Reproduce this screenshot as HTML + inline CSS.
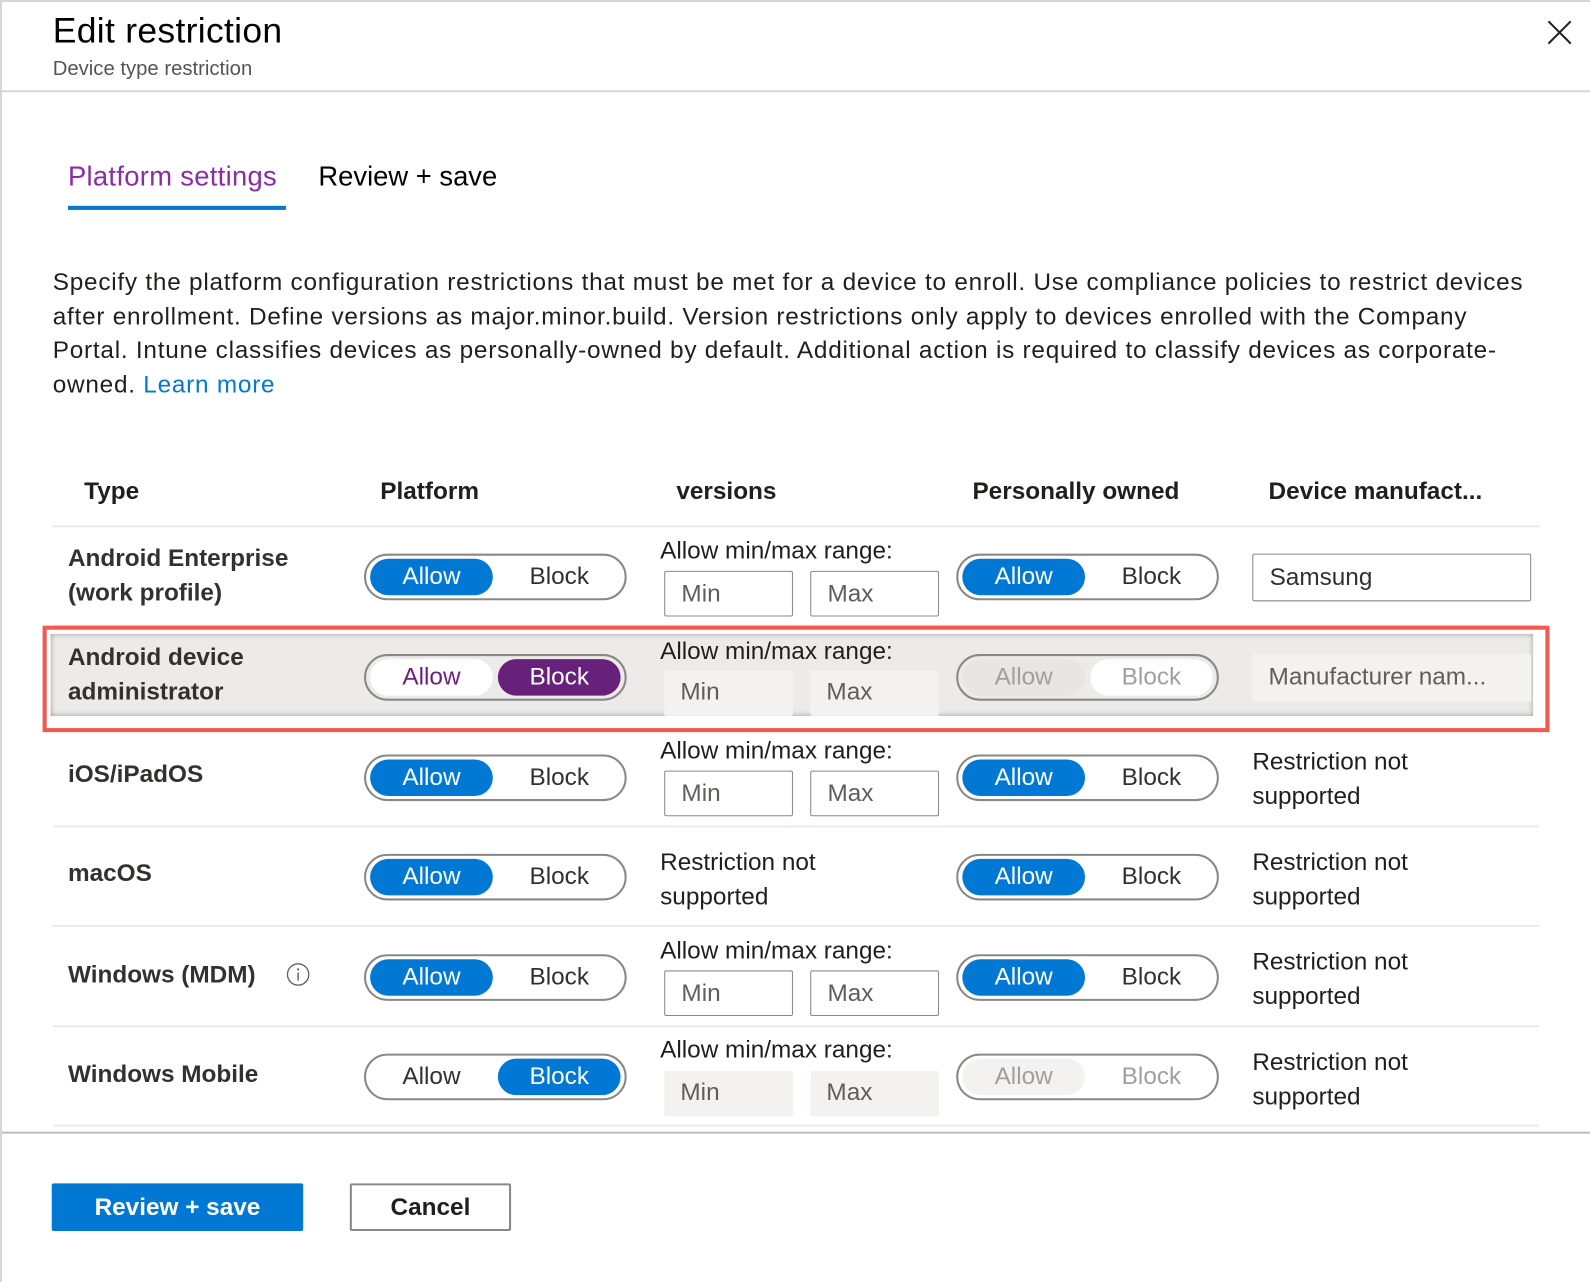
<!DOCTYPE html>
<html><head><meta charset="utf-8">
<style>
html,body{margin:0;padding:0;background:#fff;overflow:hidden;width:1590px;height:1282px}
#w{position:absolute;left:0;top:0;width:1568px;height:1264px;transform:scale(1.01403);transform-origin:0 0;font-family:"Liberation Sans",sans-serif;color:#201f1e}
.a{position:absolute;white-space:nowrap}
.t{font-size:23px;color:#323130}
.b{font-weight:bold;font-size:24px}
.sb{font-weight:bold;font-size:24px}
.tg{position:absolute;width:255px;height:42px;border:2px solid #8a8886;border-radius:24px;background:#fff}
.p{position:absolute;top:3px;height:36px;width:121px;border-radius:18px;font-size:24px;line-height:36px;text-align:center;color:#323130}
.p.l{left:4px}.p.r{left:130px}
.blue{background:#0078d4;color:#fff}
.in{position:absolute;width:124px;height:43px;border:1.5px solid #8a8886;font-size:24px;line-height:43px;padding-left:16px;box-sizing:border-box;color:#605e5c;border-radius:2px}
.dis{background:#f3f2f1;border:none;color:#605e5c}
.sep{position:absolute;left:52px;width:1466px;height:2px;background:#edebe9}
.rn{font-size:24px;line-height:34px;color:#201f1e}
</style></head><body><div id="w">
<div class="a" style="left:0;top:0;width:1568px;height:2px;background:#d6d6d6"></div>
<div class="a" style="left:0;top:0;width:2px;height:1264px;background:#d6d6d6"></div>
<div class="a" style="left:52px;top:11px;font-size:35px;color:#000;letter-spacing:0.3px">Edit restriction</div>
<div class="a" style="left:52px;top:57px;font-size:20px;color:#555">Device type restriction</div>
<svg class="a" style="left:1525px;top:19px" width="26" height="26" viewBox="0 0 26 26"><path d="M2 2L24 24M24 2L2 24" stroke="#222" stroke-width="2"/></svg>
<div class="a" style="left:2px;top:89px;width:1566px;height:2px;background:#d6d6d6"></div>

<div class="a" style="left:67px;top:159px;font-size:27px;color:#8a2ba8;letter-spacing:0.3px">Platform settings</div>
<div class="a" style="left:67px;top:203px;width:215px;height:4px;background:#0078d4"></div>
<div class="a" style="left:314px;top:159px;font-size:27px;color:#000">Review + save</div>

<div class="a" style="left:52px;top:262px;font-size:24px;line-height:33.7px;letter-spacing:0.75px;color:#201f1e">Specify the platform configuration restrictions that must be met for a device to enroll. Use compliance policies to restrict devices<br>after enrollment. Define versions as major.minor.build. Version restrictions only apply to devices enrolled with the Company<br>Portal. Intune classifies devices as personally-owned by default. Additional action is required to classify devices as corporate-<br>owned. <span style="color:#0078d4">Learn more</span></div>

<div class="a sb" style="left:83px;top:471px">Type</div>
<div class="a sb" style="left:375px;top:471px">Platform</div>
<div class="a sb" style="left:667px;top:471px">versions</div>
<div class="a sb" style="left:959px;top:471px">Personally owned</div>
<div class="a sb" style="left:1251px;top:471px">Device manufact...</div>
<div class="sep" style="top:518px"></div>

<!-- row1 -->
<div class="a t b" style="left:67px;top:534px;line-height:34px">Android Enterprise<br>(work profile)</div>
<div class="tg" style="left:359px;top:546px"><div class="p l blue">Allow</div><div class="p r">Block</div></div>
<div class="a rn" style="left:651px;top:527px">Allow min/max range:</div>
<div class="in" style="left:655px;top:563px;width:127px;height:45px">Min</div>
<div class="in" style="left:799px;top:563px;width:127px;height:45px">Max</div>
<div class="tg" style="left:943px;top:546px"><div class="p l blue">Allow</div><div class="p r">Block</div></div>
<div class="in" style="left:1235px;top:546px;width:275px;height:47px;line-height:45px;color:#323130">Samsung</div>
<div class="sep" style="top:616px"></div>

<!-- row2 highlight -->
<div class="a" style="left:42px;top:617px;width:1478px;height:97px;border:4px solid #f5584c;background:#fff"></div>
<div class="a" style="left:50px;top:625px;width:1462px;height:81px;background:#edebe9;box-shadow:inset 0 0 6px rgba(0,0,0,.35)"></div>
<div class="a t b" style="left:67px;top:632px;line-height:34px">Android device<br>administrator</div>
<div class="tg" style="left:359px;top:645px;background:#edebe9"><div class="p l" style="background:#fff;color:#6b2181">Allow</div><div class="p r" style="background:#68217a;color:#fff">Block</div></div>
<div class="a rn" style="left:651px;top:626px">Allow min/max range:</div>
<div class="in dis" style="left:655px;top:661px;width:127px;height:45px">Min</div>
<div class="in dis" style="left:799px;top:661px;width:127px;height:45px">Max</div>
<div class="tg" style="left:943px;top:645px;background:#edebe9;border-color:#8a8886"><div class="p l" style="background:#e8e6e4;color:#a19f9d">Allow</div><div class="p r" style="background:#fff;color:#a19f9d">Block</div></div>
<div class="in dis" style="left:1235px;top:645px;width:275px;height:47px;line-height:45px;color:#605e5c">Manufacturer nam...</div>

<!-- row3 -->
<div class="a t b" style="left:67px;top:750px">iOS/iPadOS</div>
<div class="tg" style="left:359px;top:744px"><div class="p l blue">Allow</div><div class="p r">Block</div></div>
<div class="a rn" style="left:651px;top:724px">Allow min/max range:</div>
<div class="in" style="left:655px;top:760px;width:127px;height:45px">Min</div>
<div class="in" style="left:799px;top:760px;width:127px;height:45px">Max</div>
<div class="tg" style="left:943px;top:744px"><div class="p l blue">Allow</div><div class="p r">Block</div></div>
<div class="a rn" style="left:1235px;top:735px">Restriction not<br>supported</div>
<div class="sep" style="top:814px"></div>

<!-- row4 -->
<div class="a t b" style="left:67px;top:848px">macOS</div>
<div class="tg" style="left:359px;top:842px"><div class="p l blue">Allow</div><div class="p r">Block</div></div>
<div class="a rn" style="left:651px;top:834px">Restriction not<br>supported</div>
<div class="tg" style="left:943px;top:842px"><div class="p l blue">Allow</div><div class="p r">Block</div></div>
<div class="a rn" style="left:1235px;top:834px">Restriction not<br>supported</div>
<div class="sep" style="top:912px"></div>

<!-- row5 -->
<div class="a t b" style="left:67px;top:948px">Windows (MDM)</div>
<svg class="a" style="left:282px;top:949px" width="24" height="24" viewBox="0 0 24 24"><circle cx="12" cy="12" r="10.5" fill="none" stroke="#605e5c" stroke-width="1.3"/><circle cx="12" cy="7" r="1.1" fill="#605e5c"/><path d="M12 10v8" stroke="#605e5c" stroke-width="1.4"/></svg>
<div class="tg" style="left:359px;top:941px"><div class="p l blue">Allow</div><div class="p r">Block</div></div>
<div class="a rn" style="left:651px;top:921px">Allow min/max range:</div>
<div class="in" style="left:655px;top:957px;width:127px;height:45px">Min</div>
<div class="in" style="left:799px;top:957px;width:127px;height:45px">Max</div>
<div class="tg" style="left:943px;top:941px"><div class="p l blue">Allow</div><div class="p r">Block</div></div>
<div class="a rn" style="left:1235px;top:932px">Restriction not<br>supported</div>
<div class="sep" style="top:1011px"></div>

<!-- row6 -->
<div class="a t b" style="left:67px;top:1046px">Windows Mobile</div>
<div class="tg" style="left:359px;top:1039px"><div class="p l">Allow</div><div class="p r blue">Block</div></div>
<div class="a rn" style="left:651px;top:1019px">Allow min/max range:</div>
<div class="in dis" style="left:655px;top:1056px;width:127px;height:45px">Min</div>
<div class="in dis" style="left:799px;top:1056px;width:127px;height:45px">Max</div>
<div class="tg" style="left:943px;top:1039px"><div class="p l" style="background:#f3f2f1;color:#a19f9d">Allow</div><div class="p r" style="color:#a19f9d">Block</div></div>
<div class="a rn" style="left:1235px;top:1031px">Restriction not<br>supported</div>
<div class="sep" style="top:1109px"></div>

<div class="a" style="left:2px;top:1116px;width:1566px;height:2px;background:#bdbdbd"></div>
<div class="a" style="left:51px;top:1167px;width:248px;height:47px;background:#0078d4;border-radius:2px;color:#fff;font-weight:bold;font-size:24px;line-height:47px;text-align:center">Review + save</div>
<div class="a" style="left:345px;top:1167px;width:155px;height:43px;border:2px solid #8a8886;border-radius:2px;color:#201f1e;font-weight:bold;font-size:24px;line-height:43px;text-align:center">Cancel</div>
</div></body></html>
